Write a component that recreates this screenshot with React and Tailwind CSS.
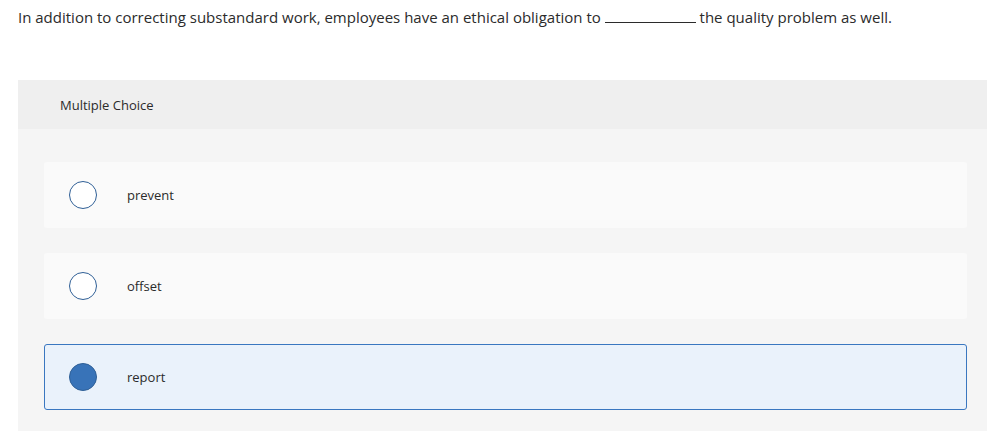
import React from 'react';

const options = [
  { label: 'prevent', selected: false },
  { label: 'offset', selected: false },
  { label: 'report', selected: true },
];

export default function App() {
  return (
    <div
      className="w-[987px] h-[431px] bg-white overflow-hidden text-[#2b2b2b]"
      style={{ fontFamily: '"Open Sans", "Liberation Sans", sans-serif' }}
    >
      {/* Question */}
      <p className="pl-[18px] pt-[7px] text-[15px] leading-[20px]">
        In addition to correcting substandard work, employees have an ethical obligation to{' '}
        <span className="inline-block w-[91px] border-b border-[#2b2b2b] align-baseline"></span>{' '}
        the quality problem as well.
      </p>

      {/* Multiple choice panel */}
      <div className="ml-[18px] mt-[53px] bg-[#f5f5f5] h-[351px]">
        <div className="h-[49px] bg-[#efefef] flex items-center pl-[42px] pt-[2px] text-[13px]">
          Multiple Choice
        </div>
        <div className="pt-[33px] pl-[26px] pr-[20px] flex flex-col gap-[25px]">
          {options.map((o) => (
            <div
              key={o.label}
              className={
                o.selected
                  ? 'h-[66px] flex items-center rounded-[3px] border border-[#3a77c0] bg-[#eaf2fb]'
                  : 'h-[66px] flex items-center rounded-[3px] border border-transparent bg-[#fafafa]'
              }
            >
              <div
                className={
                  o.selected
                    ? 'ml-[24px] w-[28px] h-[28px] rounded-full border border-[#2f5f96] bg-[#3873b8]'
                    : 'ml-[24px] w-[28px] h-[28px] rounded-full border border-[#2f5f96] bg-white'
                }
              />
              <span className="ml-[30px] mt-[2px] text-[13px]">{o.label}</span>
            </div>
          ))}
        </div>
      </div>
    </div>
  );
}
